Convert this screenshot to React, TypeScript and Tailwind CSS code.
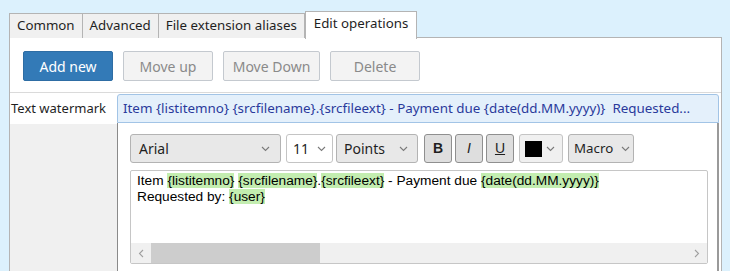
import React from 'react';

const Chevron: React.FC<{ className?: string }> = ({ className }) => (
  <svg width="9" height="6" viewBox="0 0 9 6" className={className}>
    <polyline points="1,1 4.5,4.5 8,1" fill="none" stroke="#7a7a7a" strokeWidth="1.1" />
  </svg>
);

const Tag: React.FC<{ children: React.ReactNode }> = ({ children }) => (
  <span className="bg-[#c3edb0]">{children}</span>
);

const App: React.FC = () => {
  const tabs = ['Common', 'Advanced', 'File extension aliases'];

  return (
    <div className="w-[730px] h-[271px] overflow-hidden bg-[#dcf1fd] pl-[9px] pt-[10px] font-['Noto_Sans',sans-serif] text-[#222]">
      {/* Tabs */}
      <div className="flex items-end h-[28px] relative z-10">
        {tabs.map((tab) => (
          <div
            key={tab}
            className="h-[25px] -mr-px px-[7px] flex items-center bg-[#f0f0f0] border border-b-0 border-[#b4b4b4] text-[13.3px] text-[#1f1f1f]"
          >
            {tab}
          </div>
        ))}
        <div className="h-[28px] px-[8px] ml-px flex items-center bg-white border border-b-0 border-[#b4b4b4] text-[13.3px] text-[#1f1f1f] -mb-px pb-[3px]">
          Edit operations
        </div>
      </div>

      {/* Panel */}
      <div className="w-[713px] h-[240px] -mt-px bg-white border border-[#b4b4b4] flex flex-col">
        <div className="flex gap-[10px] pl-[13px] pt-[13px] pb-[11px] border-b border-[#dadada]">
          <button className="w-[90px] h-[30px] rounded-[2px] bg-[#337ab7] border border-[#2e6da4] text-white text-[14px]">
            Add new
          </button>
          <button className="w-[90px] h-[30px] rounded-[2px] bg-[#f3f3f3] border border-[#c4c9cf] text-[#8a8a8a] text-[14px]">
            Move up
          </button>
          <button className="w-[97px] h-[30px] rounded-[2px] bg-[#f3f3f3] border border-[#c4c9cf] text-[#8a8a8a] text-[14px]">
            Move Down
          </button>
          <button className="w-[90px] h-[30px] rounded-[2px] bg-[#f3f3f3] border border-[#c4c9cf] text-[#8a8a8a] text-[14px]">
            Delete
          </button>
        </div>

        <div className="flex flex-1 min-h-0">
          {/* Label column */}
          <div className="w-[107px] flex flex-col">
            <div className="h-[31px] flex items-center pl-px text-[13px] text-[#1f1f1f] bg-white">Text watermark</div>
            <div className="flex-1 bg-[#f0f0f0]" />
          </div>

          {/* Value column */}
          <div className="w-[602px] flex flex-col pt-[1px]">
            <div className="h-[29px] flex items-center pl-[5px] bg-[#e4f0fb] border border-[#a2c4e6] rounded-t-[3px] text-[13.4px] text-[#2a3a9c] whitespace-nowrap overflow-hidden">
              Item {'{listitemno}'} {'{srcfilename}'}.{'{srcfileext}'} - Payment due {'{date(dd.MM.yyyy)}'}&nbsp; Requested...
            </div>
            <div className="flex-1 bg-white border-l border-[#8a8a8a] border-r-2 border-r-[#9a9a9a] pl-[12px] pr-[10px] pt-[11px]">
              {/* Toolbar */}
              <div className="flex items-center h-[29px] text-[14px] text-[#1f1f1f]">
                <div className="w-[151px] h-full flex items-center justify-between pl-[8px] pr-[10px] bg-[#e8e8e8] border border-[#b3b3b3] rounded-[3px]">
                  <span>Arial</span>
                  <Chevron />
                </div>
                <div className="ml-[5px] w-[47px] h-full flex items-center justify-between pl-[6px] pr-[6px] bg-white border border-[#c4c4c4] rounded-[3px]">
                  <span>11</span>
                  <Chevron />
                </div>
                <div className="ml-[3px] w-[82px] h-full flex items-center justify-between pl-[7px] pr-[9px] bg-[#e8e8e8] border border-[#b3b3b3] rounded-[3px]">
                  <span>Points</span>
                  <Chevron />
                </div>
                <div className="ml-[6px] w-[28px] h-full flex items-center justify-center bg-[#dedede] border border-[#8f8f8f] rounded-[3px] font-['Liberation_Sans',sans-serif] font-bold text-[14px]">
                  B
                </div>
                <div className="ml-[3px] w-[28px] h-full flex items-center justify-center bg-[#dedede] border border-[#8f8f8f] rounded-[3px] font-['Liberation_Sans',sans-serif] italic text-[14px]">
                  I
                </div>
                <div className="ml-[3px] w-[28px] h-full flex items-center justify-center bg-[#dedede] border border-[#8f8f8f] rounded-[3px] font-['Liberation_Sans',sans-serif] underline text-[14px]">
                  U
                </div>
                <div className="ml-[5px] w-[44px] h-full flex items-center justify-between pl-[5px] pr-[7px] bg-[#f0f0f0] border border-[#c4c4c4] rounded-[3px]">
                  <div className="w-[17px] h-[16px] bg-black" />
                  <Chevron />
                </div>
                <div className="ml-[5px] w-[66px] h-full flex items-center gap-[8px] pl-[5px] bg-[#e8e8e8] border border-[#b3b3b3] rounded-[3px]">
                  <span className="text-[13.3px]">Macro</span>
                  <Chevron />
                </div>
              </div>

              {/* Editor */}
              <div className="mt-[7px] w-[578px] h-[94px] border border-[#c6c6c6] rounded-[2px] flex flex-col overflow-hidden">
                <div className="flex-1 pl-[6px] pt-[2px] font-['Liberation_Sans',Arial,sans-serif] text-[13.7px] leading-[16px] text-black whitespace-nowrap">
                  <div>
                    Item <Tag>{'{listitemno}'}</Tag> <Tag>{'{srcfilename}'}</Tag>.<Tag>{'{srcfileext}'}</Tag> - Payment due{' '}
                    <Tag>{'{date(dd.MM.yyyy)}'}</Tag>
                  </div>
                  <div>
                    Requested by: <Tag>{'{user}'}</Tag>
                  </div>
                </div>
                <div className="h-[20px] bg-[#f0f0f0] flex items-center">
                  <div className="w-[20px] flex justify-center">
                    <svg width="6" height="9" viewBox="0 0 6 9">
                      <polyline points="5,1 1.5,4.5 5,8" fill="none" stroke="#a0a0a0" strokeWidth="1.1" />
                    </svg>
                  </div>
                  <div className="w-[169px] h-full bg-[#cdcdcd]" />
                  <div className="flex-1" />
                  <div className="w-[20px] flex justify-center">
                    <svg width="6" height="9" viewBox="0 0 6 9">
                      <polyline points="1,1 4.5,4.5 1,8" fill="none" stroke="#a0a0a0" strokeWidth="1.1" />
                    </svg>
                  </div>
                </div>
              </div>
            </div>
          </div>
        </div>
      </div>
    </div>
  );
};

export default App;
